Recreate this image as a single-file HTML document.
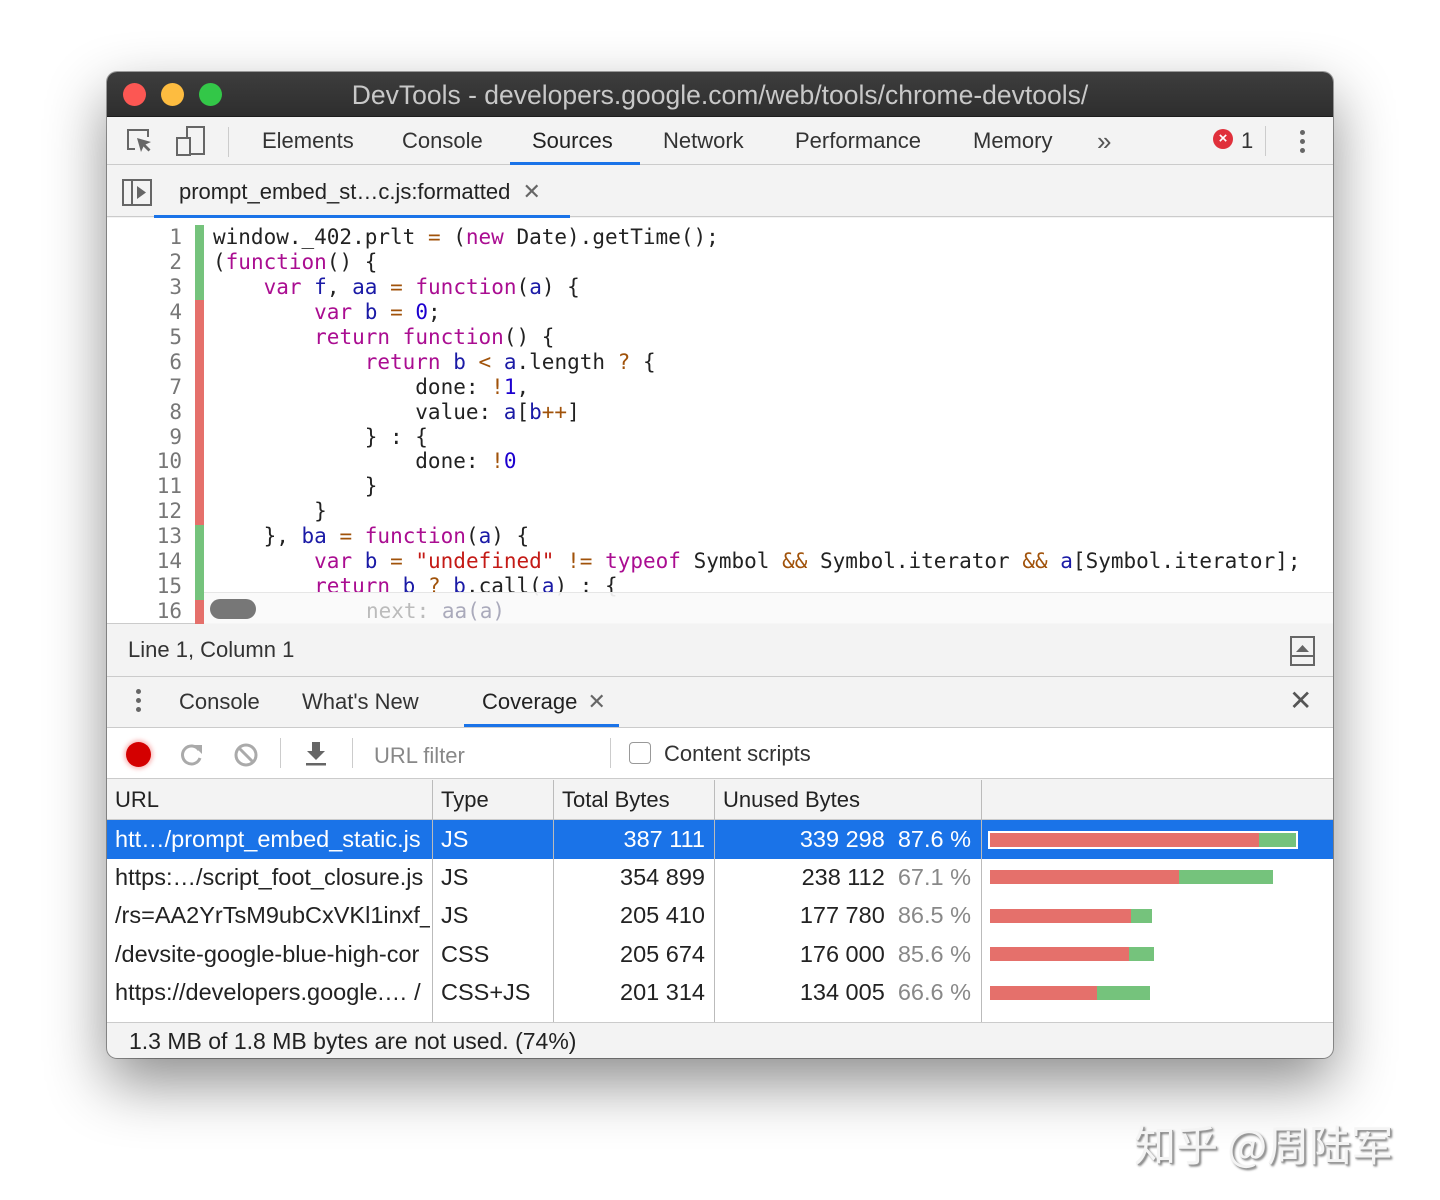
<!DOCTYPE html>
<html><head><meta charset="utf-8">
<style>
*{margin:0;padding:0;box-sizing:border-box}
body{width:1440px;height:1200px;background:#fff;position:relative;overflow:hidden;font-family:"Liberation Sans",Arial,sans-serif;color:#333}
.a{position:absolute}
#win{left:107px;top:72px;width:1226px;height:986px;border-radius:10px;overflow:hidden;background:#f3f3f3;box-shadow:0 25px 60px rgba(0,0,0,.45),0 0 0 1px rgba(0,0,0,.35)}
.t{font-size:22px;white-space:nowrap}
.r{font-size:23.5px}
.code{font-family:"DejaVu Sans Mono",monospace;font-size:21px;white-space:pre;color:#222}
.k{color:#aa0d91}.n{color:#1c00cf}.v{color:#1a1aa6}.s{color:#c41a16}.o{color:#a0520a}
.ln{font-family:"DejaVu Sans Mono",monospace;font-size:21px;color:#777;text-align:right;width:40px}
.bar{position:absolute;height:14px}
</style></head><body>
<div id="win" class="a">
 <div class="a" style="left:0;top:0;width:1226px;height:45px;background:linear-gradient(#3d3d3d,#2e2e2e);border-bottom:1px solid #1d1d1d"></div>
 <div class="a" style="left:16px;top:11px;width:23px;height:23px;border-radius:50%;background:#fc5753"></div>
 <div class="a" style="left:54px;top:11px;width:23px;height:23px;border-radius:50%;background:#fdbc40"></div>
 <div class="a" style="left:92px;top:11px;width:23px;height:23px;border-radius:50%;background:#33c748"></div>
 <div class="a t" style="left:0;width:1226px;top:8px;text-align:center;color:#c8c8c8;font-size:26.5px">DevTools - developers.google.com/web/tools/chrome-devtools/</div>
 <div class="a" style="left:0;top:45px;width:1226px;height:48px;background:#f3f3f3;border-bottom:1px solid #cbcbcb"></div>
 <svg class="a" style="left:18px;top:55px" width="30" height="30" viewBox="0 0 30 30"><path d="M10 22H3V3h20v7" fill="none" stroke="#666" stroke-width="2"/><path d="M12 11l4 14 2.5-5.5 5 5 2-2-5-5 5.5-2.5z" fill="#666"/></svg>
 <svg class="a" style="left:68px;top:53px" width="32" height="32" viewBox="0 0 32 32"><rect x="12" y="2" width="17" height="27" fill="none" stroke="#666" stroke-width="2"/><rect x="2" y="13" width="13" height="17" fill="#f3f3f3" stroke="#666" stroke-width="2"/></svg>
 <div class="a" style="left:121px;top:55px;width:1px;height:30px;background:#ccc"></div>
 <div class="a t" style="left:155px;top:56px">Elements</div>
 <div class="a t" style="left:295px;top:56px">Console</div>
 <div class="a t" style="left:425px;top:56px;color:#222">Sources</div>
 <div class="a" style="left:403px;top:90px;width:130px;height:3px;background:#1a73e8"></div>
 <div class="a t" style="left:556px;top:56px">Network</div>
 <div class="a t" style="left:688px;top:56px">Performance</div>
 <div class="a t" style="left:866px;top:56px">Memory</div>
 <div class="a t" style="left:990px;top:54px;font-size:26px;color:#555">»</div>
 <div class="a" style="left:1106px;top:57px;width:20px;height:20px;border-radius:50%;background:#e0303b;color:#fff;font-size:15px;text-align:center;line-height:20px;font-weight:bold">×</div>
 <div class="a t" style="left:1134px;top:56px">1</div>
 <div class="a" style="left:1158px;top:54px;width:1px;height:30px;background:#ccc"></div>
 <div class="a" style="left:1193px;top:58px;width:5px;height:5px;border-radius:50%;background:#666;box-shadow:0 9px 0 #666,0 18px 0 #666"></div>
 <div class="a" style="left:0;top:94px;width:1226px;height:51px;background:#f3f3f3;border-bottom:1px solid #cbcbcb"></div>
 <svg class="a" style="left:15px;top:107px" width="30" height="27" viewBox="0 0 30 27"><rect x="1" y="1" width="28" height="25" fill="none" stroke="#666" stroke-width="2"/><line x1="10" y1="1" x2="10" y2="26" stroke="#666" stroke-width="2"/><path d="M15 7v13l9-6.5z" fill="#666"/></svg>
 <div class="a t" style="left:72px;top:107px;color:#222">prompt_embed_st…c.js:formatted <span style="color:#666;margin-left:6px">✕</span></div>
 <div class="a" style="left:47px;top:143px;width:416px;height:3px;background:#1a73e8"></div>
 <div class="a" style="left:0;top:146px;width:1226px;height:406px;background:#fff;border-bottom:1px solid #cbcbcb"></div>
 <div class="a" style="left:88px;top:153px;width:9px;height:75px;background:#75c37c"></div>
 <div class="a" style="left:88px;top:228px;width:9px;height:225px;background:#e5706b"></div>
 <div class="a" style="left:88px;top:453px;width:9px;height:75px;background:#75c37c"></div>
 <div class="a" style="left:88px;top:528px;width:9px;height:24px;background:#e5706b"></div>
 <div class="a ln" style="left:35px;top:153px;line-height:24.93px">1<br>2<br>3<br>4<br>5<br>6<br>7<br>8<br>9<br>10<br>11<br>12<br>13<br>14<br>15<br>16</div>
 <div class="a code" style="left:106px;top:153px;line-height:24.93px;height:373px;overflow:hidden">window._402.prlt <span class="o">=</span> (<span class="k">new</span> Date).getTime();
(<span class="k">function</span>() {
    <span class="k">var</span> <span class="v">f</span>, <span class="v">aa</span> <span class="o">=</span> <span class="k">function</span>(<span class="v">a</span>) {
        <span class="k">var</span> <span class="v">b</span> <span class="o">=</span> <span class="n">0</span>;
        <span class="k">return</span> <span class="k">function</span>() {
            <span class="k">return</span> <span class="v">b</span> <span class="o">&lt;</span> <span class="v">a</span>.length <span class="o">?</span> {
                done: <span class="o">!</span><span class="n">1</span>,
                value: <span class="v">a</span>[<span class="v">b</span><span class="o">++</span>]
            } : {
                done: <span class="o">!</span><span class="n">0</span>
            }
        }
    }, <span class="v">ba</span> <span class="o">=</span> <span class="k">function</span>(<span class="v">a</span>) {
        <span class="k">var</span> <span class="v">b</span> <span class="o">=</span> <span class="s">"undefined"</span> <span class="o">!=</span> <span class="k">typeof</span> Symbol <span class="o">&amp;&amp;</span> Symbol.iterator <span class="o">&amp;&amp;</span> <span class="v">a</span>[Symbol.iterator];
        <span class="k">return</span> <span class="v">b</span> <span class="o">?</span> <span class="v">b</span>.call(<span class="v">a</span>) : {</div>
 <div class="a" style="left:97px;top:520px;width:1129px;height:32px;background:rgba(250,250,250,.92);border-top:1px solid #e6e6e6"></div>
 <div class="a code" style="left:259px;top:527px;color:#bbb">next: <span style="color:#aab">aa(a)</span></div>
 <div class="a" style="left:103px;top:527px;width:46px;height:20px;border-radius:10px;background:#777"></div>
 <div class="a t" style="left:21px;top:565px">Line 1, Column 1</div>
 <svg class="a" style="left:1183px;top:564px" width="25" height="30" viewBox="0 0 25 30"><rect x="1" y="1" width="23" height="28" fill="none" stroke="#666" stroke-width="2"/><line x1="1" y1="20" x2="24" y2="20" stroke="#666" stroke-width="2"/><path d="M6 16l6.5-7 6.5 7z" fill="#666"/></svg>
 <div class="a" style="left:0;top:604px;width:1226px;height:1px;background:#cbcbcb"></div>
 <div class="a" style="left:29px;top:617px;width:5px;height:5px;border-radius:50%;background:#666;box-shadow:0 9px 0 #666,0 18px 0 #666"></div>
 <div class="a t" style="left:72px;top:617px">Console</div>
 <div class="a t" style="left:195px;top:617px">What's New</div>
 <div class="a t" style="left:375px;top:617px;color:#222">Coverage <span style="color:#666;margin-left:4px">✕</span></div>
 <div class="a" style="left:357px;top:652px;width:155px;height:3px;background:#1a73e8"></div>
 <div class="a t" style="left:1182px;top:612px;font-size:28px;color:#555">✕</div>
 <div class="a" style="left:0;top:655px;width:1226px;height:1px;background:#cbcbcb"></div>
 <div class="a" style="left:0;top:656px;width:1226px;height:51px;background:#fff;border-bottom:1px solid #cbcbcb"></div>
 <div class="a" style="left:19px;top:670px;width:25px;height:25px;border-radius:50%;background:#d40000;box-shadow:0 0 4px 2px rgba(240,80,80,.4)"></div>
 <svg class="a" style="left:72px;top:670px" width="26" height="26" viewBox="0 0 26 26"><path d="M20 8A9 9 0 1 0 21 16" fill="none" stroke="#aaa" stroke-width="3"/><path d="M14 3h9v9z" fill="#aaa"/></svg>
 <svg class="a" style="left:126px;top:670px" width="26" height="26" viewBox="0 0 26 26"><circle cx="13" cy="13" r="10" fill="none" stroke="#aaa" stroke-width="3"/><line x1="6" y1="6" x2="20" y2="20" stroke="#aaa" stroke-width="3"/></svg>
 <div class="a" style="left:173px;top:666px;width:1px;height:30px;background:#ccc"></div>
 <svg class="a" style="left:197px;top:669px" width="24" height="26" viewBox="0 0 24 26"><path d="M8 1h8v9h5l-9 9-9-9h5z" fill="#666"/><rect x="2" y="22" width="20" height="2.5" fill="#666"/></svg>
 <div class="a" style="left:245px;top:666px;width:1px;height:30px;background:#ccc"></div>
 <div class="a t" style="left:267px;top:671px;color:#888">URL filter</div>
 <div class="a" style="left:503px;top:666px;width:1px;height:30px;background:#ccc"></div>
 <div class="a" style="left:522px;top:670px;width:22px;height:22px;border:1.5px solid #999;border-radius:4px;background:#fff"></div>
 <div class="a t" style="left:557px;top:669px">Content scripts</div>
 <div class="a" style="left:0;top:708px;width:1226px;height:40px;background:#f3f3f3;border-bottom:1px solid #cbcbcb"></div>
 <div class="a" style="left:0;top:748px;width:1226px;height:202px;background:#fff"></div>
 <div class="a" style="left:0;top:748px;width:1226px;height:39px;background:#1a73e8"></div>
 <div class="a" style="left:325px;top:708px;width:1px;height:242px;background:#bbb"></div>
 <div class="a" style="left:446px;top:708px;width:1px;height:242px;background:#bbb"></div>
 <div class="a" style="left:607px;top:708px;width:1px;height:242px;background:#bbb"></div>
 <div class="a" style="left:874px;top:708px;width:1px;height:242px;background:#bbb"></div>
 <div class="a t" style="left:8px;top:715px;color:#222">URL</div>
 <div class="a t" style="left:334px;top:715px;color:#222">Type</div>
 <div class="a t" style="left:455px;top:715px;color:#222">Total Bytes</div>
 <div class="a t" style="left:616px;top:715px;color:#222">Unused Bytes</div>

 <div class="a t r" style="left:8px;top:754px;color:#fff">htt…/prompt_embed_static.js</div>
 <div class="a t r" style="left:334px;top:754px;color:#fff">JS</div>
 <div class="a t r" style="left:446px;width:152px;text-align:right;top:754px;color:#fff">387 111</div>
 <div class="a t r" style="left:607px;width:257px;text-align:right;top:754px;color:#fff">339 298&nbsp; 87.6 %</div>
 <div class="a" style="left:881px;top:759px;width:310px;height:18px;border:2px solid #fff;background:#75c37c"><div style="width:269px;height:14px;background:#e5706b"></div></div>

 <div class="a t r" style="left:8px;top:792px;color:#222">https:…/script_foot_closure.js</div>
 <div class="a t r" style="left:334px;top:792px;color:#222">JS</div>
 <div class="a t r" style="left:446px;width:152px;text-align:right;top:792px;color:#222">354 899</div>
 <div class="a t r" style="left:607px;width:257px;text-align:right;top:792px;color:#222">238 112&nbsp; <span style="color:#888">67.1 %</span></div>
 <div class="bar" style="left:883px;top:798px;width:190px;background:#e5706b"></div><div class="bar" style="left:1072px;top:798px;width:94px;background:#75c37c"></div>

 <div class="a t r" style="left:8px;top:830px;color:#222;width:315px;overflow:hidden">/rs=AA2YrTsM9ubCxVKl1inxf_</div>
 <div class="a t r" style="left:334px;top:830px;color:#222">JS</div>
 <div class="a t r" style="left:446px;width:152px;text-align:right;top:830px;color:#222">205 410</div>
 <div class="a t r" style="left:607px;width:257px;text-align:right;top:830px;color:#222">177 780&nbsp; <span style="color:#888">86.5 %</span></div>
 <div class="bar" style="left:883px;top:837px;width:141px;background:#e5706b"></div><div class="bar" style="left:1024px;top:837px;width:21px;background:#75c37c"></div>

 <div class="a t r" style="left:8px;top:869px;color:#222;width:315px;overflow:hidden">/devsite-google-blue-high-cor</div>
 <div class="a t r" style="left:334px;top:869px;color:#222">CSS</div>
 <div class="a t r" style="left:446px;width:152px;text-align:right;top:869px;color:#222">205 674</div>
 <div class="a t r" style="left:607px;width:257px;text-align:right;top:869px;color:#222">176 000&nbsp; <span style="color:#888">85.6 %</span></div>
 <div class="bar" style="left:883px;top:875px;width:140px;background:#e5706b"></div><div class="bar" style="left:1022px;top:875px;width:25px;background:#75c37c"></div>

 <div class="a t r" style="left:8px;top:907px;color:#222">https://developers.google.… /</div>
 <div class="a t r" style="left:334px;top:907px;color:#222">CSS+JS</div>
 <div class="a t r" style="left:446px;width:152px;text-align:right;top:907px;color:#222">201 314</div>
 <div class="a t r" style="left:607px;width:257px;text-align:right;top:907px;color:#222">134 005&nbsp; <span style="color:#888">66.6 %</span></div>
 <div class="bar" style="left:883px;top:914px;width:107px;background:#e5706b"></div><div class="bar" style="left:990px;top:914px;width:53px;background:#75c37c"></div>

 <div class="a" style="left:0;top:950px;width:1226px;height:1px;background:#cbcbcb"></div>
 <div class="a t" style="left:22px;top:956px;color:#222;font-size:23px">1.3 MB of 1.8 MB bytes are not used. (74%)</div>
</div>
<div class="a" style="left:1134px;top:1113px;font-family:'Noto Sans CJK SC',sans-serif;font-size:42px;color:#f4f4f4;text-shadow:1px 1px 0 #999,2px 2px 2px #777;white-space:nowrap">知乎 @周陆军</div>
</body></html>
